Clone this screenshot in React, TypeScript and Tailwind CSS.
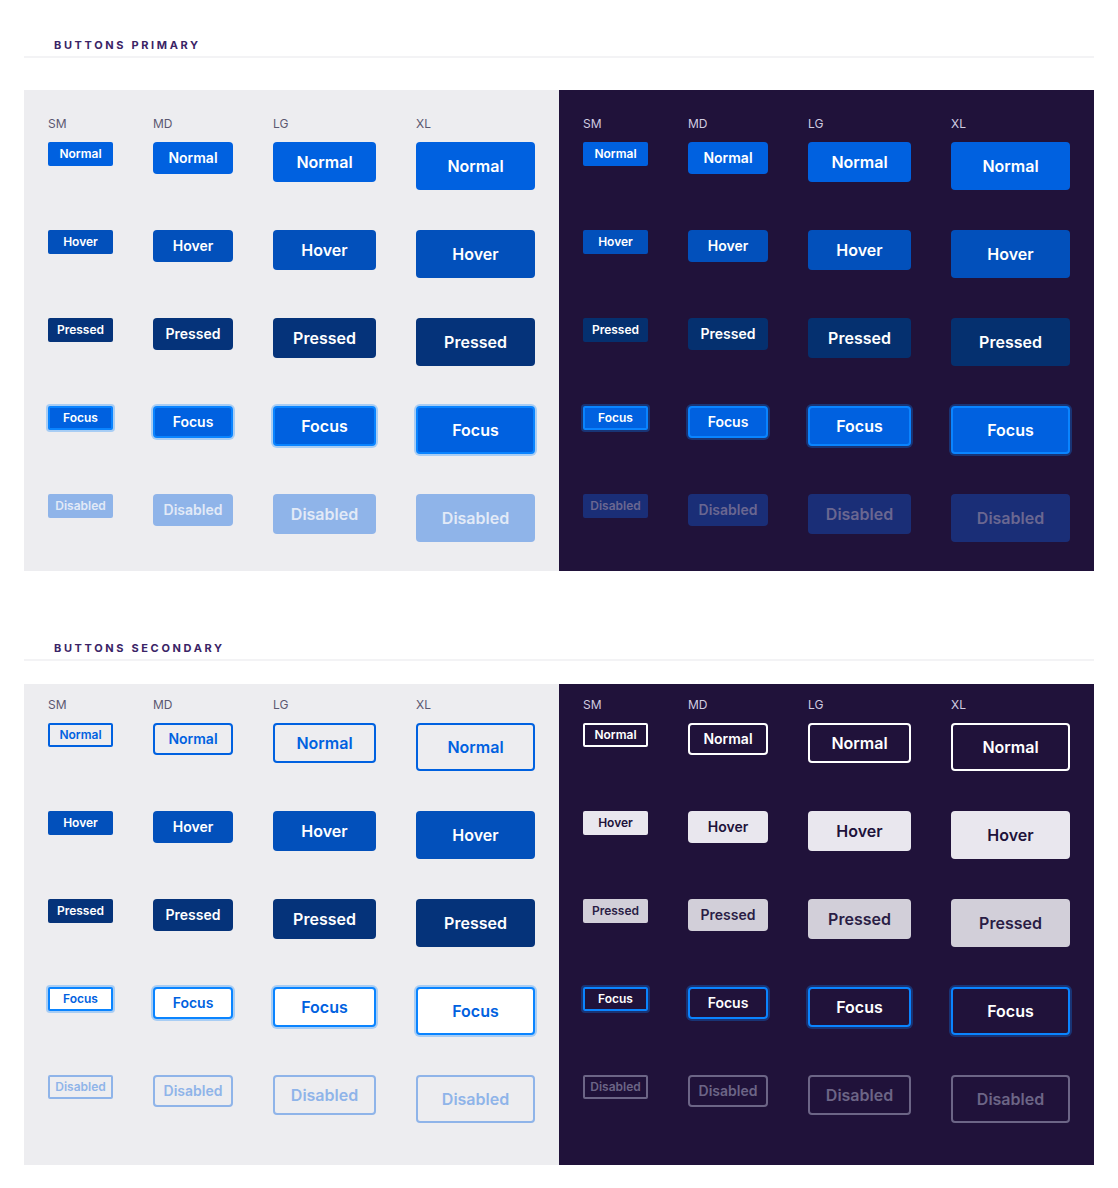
import React from "react";

type Size = "sm" | "md" | "lg" | "xl";
type State = "Normal" | "Hover" | "Pressed" | "Focus" | "Disabled";
type Theme = "light" | "dark";
type Kind = "primary" | "secondary";

const sizes: { key: Size; label: string; col: string; btn: string }[] = [
  { key: "sm", label: "SM", col: "w-[105px]", btn: "w-[65px] h-6 text-[12px] rounded-[2px]" },
  { key: "md", label: "MD", col: "w-[120px]", btn: "w-[80px] h-8 text-[14px] rounded-[4px]" },
  { key: "lg", label: "LG", col: "w-[143px]", btn: "w-[103px] h-10 text-[16px] rounded-[4px]" },
  { key: "xl", label: "XL", col: "w-[119px]", btn: "w-[119px] h-12 text-[16px] rounded-[4px]" },
];

const states: State[] = ["Normal", "Hover", "Pressed", "Focus", "Disabled"];

const focusRing = "border-2 border-[#0a84ff] shadow-[0_0_0_2px_rgba(10,132,255,0.3)]";

const styles: Record<Kind, Record<Theme, Record<State, string>>> = {
  primary: {
    light: {
      Normal: "bg-[#0061e0] text-white",
      Hover: "bg-[#0250bb] text-white",
      Pressed: "bg-[#05337a] text-white",
      Focus: `bg-[#0061e0] text-white ${focusRing}`,
      Disabled: "bg-[#8fb4e9] text-[#e2eaf7]",
    },
    dark: {
      Normal: "bg-[#0061e0] text-white",
      Hover: "bg-[#0250bb] text-white",
      Pressed: "bg-[#05306f] text-white",
      Focus: `bg-[#0061e0] text-white ${focusRing}`,
      Disabled: "bg-[#1a2e77] text-[#6a6791]",
    },
  },
  secondary: {
    light: {
      Normal: "border-2 border-[#0061e0] text-[#0061e0]",
      Hover: "bg-[#0250bb] text-white",
      Pressed: "bg-[#05337a] text-white",
      Focus: `bg-white text-[#0061e0] ${focusRing}`,
      Disabled: "border-2 border-[#8fb4e9] text-[#8fb4e9]",
    },
    dark: {
      Normal: "border-2 border-white text-white",
      Hover: "bg-[#e9e7ee] text-[#20123a]",
      Pressed: "bg-[#d2cfd9] text-[#2a1d45]",
      Focus: `text-white ${focusRing}`,
      Disabled: "border-2 border-[#6c6586] text-[#6c6586]",
    },
  },
};

const Panel = ({ kind, theme, pad }: { kind: Kind; theme: Theme; pad: string }) => (
  <div
    className={`flex-1 h-[481px] pl-6 ${pad} ${
      theme === "light" ? "bg-[#ededf0]" : "bg-[#20123a]"
    }`}
  >
    <div className="flex">
      {sizes.map((s) => (
        <div key={s.key} className={`${s.col} flex flex-col shrink-0`}>
          <span
            className={`h-[14px] text-[12px] leading-[14px] ${
              theme === "light" ? "text-[#5b5870]" : "text-[#d0cce0]"
            }`}
          >
            {s.label}
          </span>
          <div className="mt-[11px] flex flex-col gap-10">
            {states.map((st) => (
              <div key={st} className="h-12">
                <button
                  className={`${s.btn} ${styles[kind][theme][st]} flex items-center justify-center font-semibold leading-none`}
                >
                  {st}
                </button>
              </div>
            ))}
          </div>
        </div>
      ))}
    </div>
  </div>
);

const Section = ({
  title,
  kind,
  gap,
  pad,
}: {
  title: string;
  kind: Kind;
  gap: string;
  pad: string;
}) => (
  <section>
    <h2 className="pl-[30px] text-[11px] leading-[12px] font-bold tracking-[0.24em] text-[#3a2466]">
      {title}
    </h2>
    <div className="mt-[5px] h-[2px] bg-[#f3f3f5]" />
    <div className={`${gap} flex`}>
      <Panel kind={kind} theme="light" pad={pad} />
      <Panel kind={kind} theme="dark" pad={pad} />
    </div>
  </section>
);

export default function App() {
  return (
    <div
      className="w-[1118px] min-h-[1188px] bg-white px-6 pt-[39px] pb-[23px]"
      style={{ fontFamily: "Inter, 'Liberation Sans', sans-serif" }}
    >
      <Section title="BUTTONS PRIMARY" kind="primary" gap="mt-8" pad="pt-[27px]" />
      <div className="h-[71px]" />
      <Section title="BUTTONS SECONDARY" kind="secondary" gap="mt-[23px]" pad="pt-[14px]" />
    </div>
  );
}
